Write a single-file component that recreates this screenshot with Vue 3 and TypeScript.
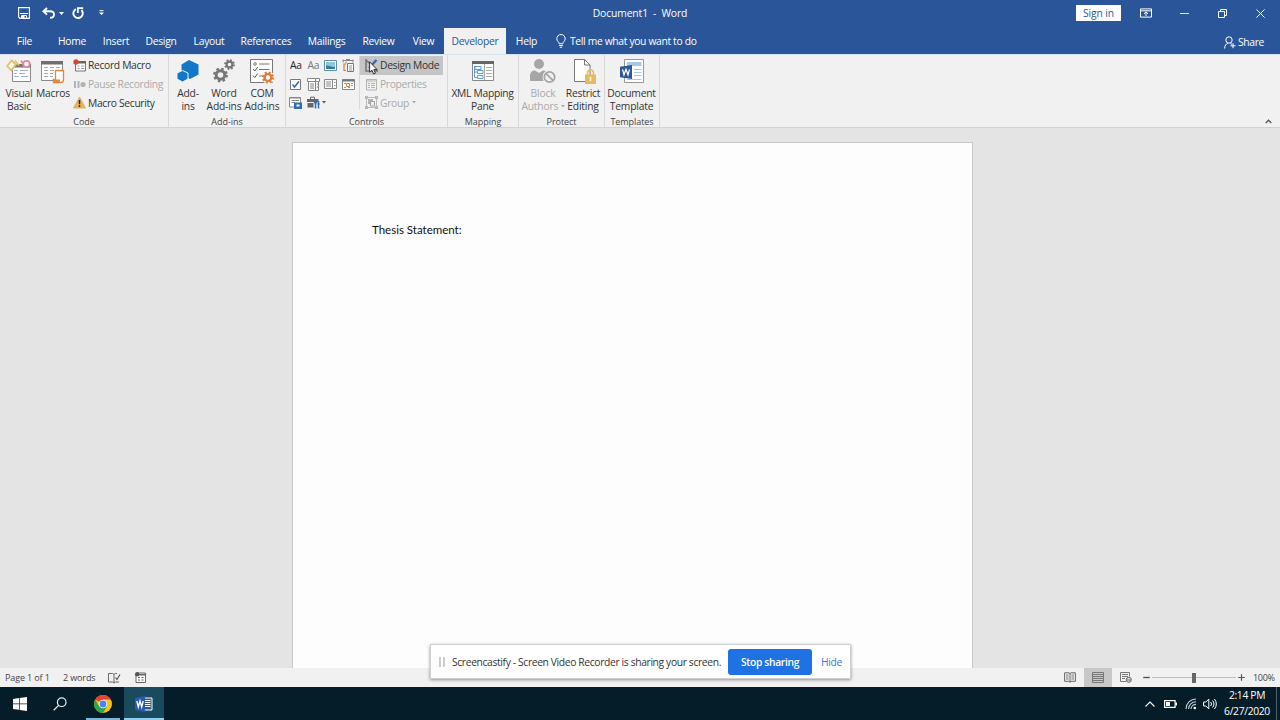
<template>
  <div class="word">
    <!-- Title bar -->
    <header class="titlebar">
      <div class="titlebar__quick">
        <svg class="quick__save" width="12" height="12" viewBox="0 0 12 12">
          <path d="M.6.6h10.8v10.8H2L.6 10z" fill="none" stroke="#fff" stroke-width="1.1" />
          <path d="M2 6.5h8M3.500 11V8.500h5V11" fill="none" stroke="#fff" />
          <path d="M4 8.500h2.500V11H4z" fill="#fff" />
        </svg>
        <svg class="quick__undo" width="13" height="12" viewBox="0 0 13 12">
          <path d="M5 1L1.400 4.300 5 7.600M1.600 4.300h6.200c3 0 4.200 1.600 4.200 3.200 0 2-1.600 3.300-4 3.300" fill="none" stroke="#fff" stroke-width="1.900" />
        </svg>
        <svg class="quick__caret" width="5" height="3" viewBox="0 0 5 3"><path d="M0 0h5L2.500 3z" fill="#fff" /></svg>
        <svg class="quick__redo" width="12" height="12" viewBox="0 0 12 12">
          <path d="M4 2.100A4.700 4.700 0 1 0 9.400 3" fill="none" stroke="#fff" stroke-width="1.900" />
          <path d="M5.900 6V1.200h5.300" fill="none" stroke="#fff" stroke-width="1.700" />
        </svg>
        <svg class="quick__more" width="5" height="6" viewBox="0 0 5 6"><path d="M.5.700h4" stroke="#fff" /><path d="M0 2.500h5L2.500 5z" fill="#fff" /></svg>
      </div>
      <div class="titlebar__name">Document1&nbsp; -&nbsp; Word</div>
      <div class="titlebar__window">
        <button class="titlebar__signin">Sign in</button>
        <svg class="window__ribbon" width="12" height="10" viewBox="0 0 12 10">
          <path d="M.5.900h11v8.200H.5zM.5 2.800h11M6 8V4.200M4 5.800l2-1.900 2 1.900" fill="none" stroke="#fff" />
        </svg>
        <svg class="window__min" width="9" height="9" viewBox="0 0 9 9"><path d="M0 4.500h9" stroke="#dbe5f3" /></svg>
        <svg class="window__restore" width="9" height="9" viewBox="0 0 9 9">
          <path d="M.5 2.500h6v6h-6zM2.500 2.500v-2h6v6h-2" fill="none" stroke="#fff" />
        </svg>
        <svg class="window__close" width="9" height="9" viewBox="0 0 9 9"><path d="M.5.500l8 8M8.500.500l-8 8" stroke="#fff" /></svg>
      </div>
    </header>

    <!-- Ribbon tabs -->
    <nav class="tabs">
      <div
        v-for="tab in tabs"
        :key="tab.label"
        class="tab"
        :class="{ 'tab--active': tab.label === activeTab }"
        :style="{ width: tab.width + 'px' }"
        @click="activeTab = tab.label"
      >
        {{ tab.label }}
      </div>
      <div class="tabs__tell">
        <svg width="10" height="14" viewBox="0 0 10 14">
          <path d="M3.200 9.800C3.200 8 .8 7.200.8 4.700a4.200 4.200 0 0 1 8.400 0c0 2.500-2.400 3.300-2.400 5.100zM3.200 11.500h3.600M3.800 13.200h2.400" fill="none" stroke="#fff" />
        </svg>
        <span>Tell me what you want to do</span>
      </div>
      <div class="tabs__share">
        <svg width="12" height="13" viewBox="0 0 12 13">
          <circle cx="5" cy="4" r="3.200" fill="none" stroke="#fff" />
          <path d="M.6 12.500c.2-3 1.400-4.600 3.200-5.200M6.400 7.200l1.600 1.300M9 7.200v5M6.500 9.800h5" fill="none" stroke="#fff" />
        </svg>
        <span>Share</span>
      </div>
    </nav>

    <!-- Ribbon -->
    <section class="ribbon">
      <div class="group group--code">
        <div class="group__body">
          <div class="big big--vb">
            <svg width="26" height="26" viewBox="0 0 26 26">
              <path d="M6.500 6.500h18v17h-18z" fill="#fff" stroke="#8a8a8a" />
              <path d="M6 6h19v3.500H6z" fill="#777" />
              <path d="M8 12.500h4M14 12.500h8M8 15.500h3M13 15.500h6M8 18.500h5M15 18.500h7" stroke="#9ab4cf" />
              <path d="M5.700 2.500L9.800 6.600 5.200 12.300 1.200 8z" fill="#fff" stroke="#e8be68" stroke-width="1.800" />
              <path d="M9 2.500l4 5" stroke="#e8be68" stroke-width="1.500" />
              <path d="M15 2.500l3.500 6" stroke="#df8796" stroke-width="1.600" />
              <circle cx="20.500" cy="6" r="3.200" fill="#fff" stroke="#df8796" stroke-width="1.800" />
            </svg>
            <span>Visual<br />Basic</span>
          </div>
          <div class="big big--macros">
            <svg width="26" height="26" viewBox="0 0 26 26">
              <path d="M1.500 3.500h21v19h-21z" fill="#fff" stroke="#8a8a8a" />
              <path d="M1 3h22v3.500H1z" fill="#6e6e6e" />
              <path d="M4 9.500h4M10 9.500h4M16 9.500h4M4 12.500h4M10 12.500h4M4 15.500h4M10 15.500h3M4 18.500h4M10 18.500h3" stroke="#a6a6a6" />
              <path d="M15.500 12.500h8v9c0 2-1 3-2.500 3h-7.500v-3h2z" fill="#fff" stroke="#e28743" stroke-width="1.300" />
              <path d="M13 21.500h7v3h-6z" fill="#e28743" />
            </svg>
            <span>Macros</span>
          </div>
          <div class="rows rows--code">
            <div class="row">
              <svg width="13" height="13" viewBox="0 0 13 13">
                <path d="M2.500 2.500h10v9.500h-10z" fill="#fff" stroke="#777" />
                <path d="M4 2h9v2.500H4z" fill="#666" />
                <path d="M4.500 7h2M8 7h3M4.500 9.500h2M8 9.500h3" stroke="#999" />
                <circle cx="3" cy="3" r="2.700" fill="#d14a33" />
              </svg>
              <span>Record Macro</span>
            </div>
            <div class="row row--off">
              <svg width="13" height="13" viewBox="0 0 13 13">
                <path d="M1 3h2v7H1zM4.500 3h2v7h-2z" fill="#b3b3b3" />
                <circle cx="10" cy="6.500" r="2.600" fill="#b3b3b3" />
              </svg>
              <span>Pause Recording</span>
            </div>
            <div class="row">
              <svg width="13" height="13" viewBox="0 0 13 13">
                <path d="M6.500 1l6 11H.5z" fill="#eab55a" stroke="#e2b063" stroke-linejoin="round" />
                <path d="M6.500 4v4.300M6.500 9.300v1.600" stroke="#222" stroke-width="1.500" />
              </svg>
              <span>Macro Security</span>
            </div>
          </div>
        </div>
        <div class="group__label">Code</div>
      </div>

      <div class="group group--addins">
        <div class="group__body">
          <div class="big big--addins">
            <svg width="26" height="26" viewBox="0 0 26 26">
              <path d="M14 2l9.500 4.500v10L15 21 6.500 16.500v-10z" fill="#1177c9" />
              <path d="M7.500 12.500l5.500 2.500v6l-5.500 3L2 21v-6z" fill="#1177c9" stroke="#f1f1f1" />
            </svg>
            <span>Add-<br />ins</span>
          </div>
          <div class="big big--wordaddins">
            <svg width="26" height="26" viewBox="0 0 26 26">
              <circle cx="9.500" cy="17" r="4.300" fill="none" stroke="#777" stroke-width="3" />
              <circle cx="9.500" cy="17" r="6.300" fill="none" stroke="#777" stroke-width="2.200" stroke-dasharray="2.500 2.450" />
              <circle cx="18.500" cy="6.500" r="2.900" fill="none" stroke="#777" stroke-width="2.200" />
              <circle cx="18.500" cy="6.500" r="4.500" fill="none" stroke="#777" stroke-width="1.800" stroke-dasharray="1.800 1.734" />
            </svg>
            <span>Word<br />Add-ins</span>
          </div>
          <div class="big big--com">
            <svg width="26" height="26" viewBox="0 0 26 26">
              <path d="M1.500 1.500h22v23h-22z" fill="#fff" stroke="#777" />
              <circle cx="6" cy="6" r="1.300" fill="none" stroke="#777" />
              <path d="M10 6h10.500M10 11.500h10.500M10 18h3" stroke="#777" />
              <path d="M4 11l1.800 2 3-4M4 17.500l1.800 2 3-4" fill="none" stroke="#555" />
              <circle cx="19" cy="19.500" r="6.400" fill="#fff" />
              <circle cx="19" cy="19.500" r="3.400" fill="none" stroke="#e07b35" stroke-width="2.400" />
              <circle cx="19" cy="19.500" r="5.100" fill="none" stroke="#e07b35" stroke-width="2" stroke-dasharray="2.100 1.905" />
            </svg>
            <span>COM<br />Add-ins</span>
          </div>
        </div>
        <div class="group__label">Add-ins</div>
      </div>

      <div class="group group--controls">
        <div class="group__body">
          <div class="controls">
            <div class="controls__cell controls__cell--rich">Aa</div>
            <div class="controls__cell controls__cell--plain">Aa</div>
            <div class="controls__cell">
              <svg width="13" height="13" viewBox="0 0 13 13">
                <path d="M.5 1.500h12v10H.5z" fill="#fff" stroke="#5f8fa0" />
                <path d="M2 3h9v5H2z" fill="#8ec6e8" /><path d="M2 6.500c3 0 5 1.500 9 1.500v2H2z" fill="#348092" />
              </svg>
            </div>
            <div class="controls__cell">
              <svg width="13" height="13" viewBox="0 0 13 13">
                <path d="M1 1.500h10M1 .5v3M11 .5v3M4 2.500v2M4 .5h4" stroke="#888" />
                <path d="M5.500 4.500h6v8h-6z" fill="#fff" stroke="#777" />
                <path d="M7 7h3M7 9h3M7 11h3" stroke="#999" />
                <path d="M4 5H2v6.500h2" fill="none" stroke="#e07b35" stroke-width="1.200" />
              </svg>
            </div>
            <div class="controls__cell">
              <svg width="13" height="13" viewBox="0 0 13 13">
                <path d="M1.500 1.500h10v10h-10z" fill="#fff" stroke="#777" />
                <path d="M3.500 6.500l2 2.500 4.500-5.500" fill="none" stroke="#2c6db5" stroke-width="1.600" />
              </svg>
            </div>
            <div class="controls__cell">
              <svg width="13" height="13" viewBox="0 0 13 13">
                <path d="M.5.500h12v3H.5zM1.500 3.500h10v9h-10z" fill="#fff" stroke="#888" />
                <path d="M8.500 1v11M3 6h4M3 8h4M3 10h4" stroke="#888" /><path d="M9.500 6h2M9.500 9h2" stroke="#888" />
              </svg>
            </div>
            <div class="controls__cell">
              <svg width="13" height="13" viewBox="0 0 13 13">
                <path d="M.5 1.500h12v9H.5z" fill="#fff" stroke="#888" />
                <path d="M8.500 2v9M2 4h5M2 6h5M2 8h5M10 4.500h1.500M10 7.500h1.500" stroke="#888" />
              </svg>
            </div>
            <div class="controls__cell">
              <svg width="13" height="13" viewBox="0 0 13 13">
                <path d="M.5 1.500h12v10H.5z" fill="#fff" stroke="#888" />
                <path d="M.5 1.500h12v2H.5z" fill="#777" />
                <path d="M2 5.500h2M9 5.500h2M2 9.500h2M6 9.500h2M9 7.500h2" stroke="#999" />
                <path d="M4.500 5.500h3v3h-3z" fill="#fff" stroke="#e07b35" />
              </svg>
            </div>
            <div class="controls__cell">
              <svg width="13" height="13" viewBox="0 0 13 13">
                <path d="M.5 1.500h11v9.500H.5z" fill="#fff" stroke="#888" />
                <path d="M1 2h10.500M2.500 4.500H10M2.500 6.500H6" stroke="#888" />
                <path d="M5 6.500h8V13H5z" fill="#2c6db5" /><path d="M7.500 8.500h3v2h-3z" fill="#fff" />
              </svg>
            </div>
            <div class="controls__cell controls__cell--tools">
              <svg width="13" height="13" viewBox="0 0 13 13">
                <path d="M3.500 3V1.200h4V3" fill="none" stroke="#666" />
                <path d="M0 3h11.500v3H0zM.5 7h6v4.500h-6z" fill="#666" />
                <path d="M8.500 5v7.500M11.500 5v7.500" stroke="#2c6db5" stroke-width="1.500" />
                <path d="M7.300 5v2h2.500V5M10.500 8h2.300" fill="none" stroke="#2c6db5" />
              </svg>
              <svg width="4" height="3" viewBox="0 0 4 3"><path d="M0 0h4L2 2.500z" fill="#555" /></svg>
            </div>
          </div>
          <div class="rows rows--controls">
            <div class="row row--pressed">
              <svg width="13" height="13" viewBox="0 0 13 13">
                <path d="M1 1v11h11.500z" fill="none" stroke="#777" stroke-width="1.600" />
                <path d="M4 9l7.500-8" stroke="#2c6db5" stroke-width="2.400" />
              </svg>
              <span>Design Mode</span>
            </div>
            <div class="row row--off">
              <svg width="13" height="13" viewBox="0 0 13 13">
                <path d="M1.500 1.500h10v10.500h-10zM1.500 3h10" fill="none" stroke="#b3b3b3" />
                <path d="M3 5.500h2M6 5.500h4M3 7.500h2M6 7.500h4M3 9.500h2M6 9.500h4" stroke="#b3b3b3" />
              </svg>
              <span>Properties</span>
            </div>
            <div class="row row--off">
              <svg width="13" height="13" viewBox="0 0 13 13">
                <path d="M1.500 1.500h10v10h-10z" fill="none" stroke="#bbb" />
                <path d="M3 3h5v5H3z" fill="#b3b3b3" /><path d="M5.500 5.500h4v4.500h-4z" fill="#eee" stroke="#a3a3a3" />
                <path d="M0 0h3v3H0zM10 0h3v3h-3zM0 10h3v3H0zM10 10h3v3h-3z" fill="#b8b8b8" />
              </svg>
              <span>Group</span>
              <svg class="row__caret" width="4" height="3" viewBox="0 0 4 3"><path d="M0 0h4L2 2.500z" fill="#aaa" /></svg>
            </div>
          </div>
        </div>
        <div class="group__label">Controls</div>
      </div>

      <div class="group group--mapping">
        <div class="group__body">
          <div class="big big--xml">
            <svg width="26" height="26" viewBox="0 0 26 26">
              <path d="M2.500 3.500h21v19h-21z" fill="#fff" stroke="#888" />
              <path d="M2 3h22v3H2z" fill="#666" />
              <path d="M14.500 6v16M16 9.500h6M16 12.500h6M16 15.500h6M16 18.500h6" stroke="#aaa" />
              <path d="M4.500 8v11.500H7M4.500 14H7" fill="none" stroke="#5b9bd5" />
              <path d="M5 8.500h6v3H5zM7.500 12.500h5.500v3H7.500zM7.500 17.500h5.500v3H7.500z" fill="#fff" stroke="#5b9bd5" />
            </svg>
            <span>XML Mapping<br />Pane</span>
          </div>
        </div>
        <div class="group__label">Mapping</div>
      </div>

      <div class="group group--protect">
        <div class="group__body">
          <div class="big big--block big--off">
            <svg width="28" height="26" viewBox="0 0 28 26">
              <circle cx="10" cy="6" r="5" fill="#a6a6a6" />
              <path d="M1 23v-5c0-3.500 2-5.500 5-5.500l4 2.500 4-2.500c3 0 4.500 2 4.500 5V23z" fill="#a6a6a6" />
              <circle cx="20.500" cy="19" r="7" fill="#f1f1f1" />
              <circle cx="20.500" cy="19" r="5.200" fill="none" stroke="#a6a6a6" stroke-width="1.800" />
              <path d="M16.800 15.300l7.400 7.400" stroke="#a6a6a6" stroke-width="1.800" />
            </svg>
            <span>Block<br />Authors <svg width="4" height="3" viewBox="0 0 4 3"><path d="M0 0h4L2 2.500z" fill="#aaa" /></svg></span>
          </div>
          <div class="big big--restrict">
            <svg width="26" height="26" viewBox="0 0 26 26">
              <path d="M4.500 1.500h10l5.500 5.500v16.500H4.500z" fill="#fff" stroke="#777" />
              <path d="M14.500 1.500V7H20" fill="none" stroke="#777" />
              <path d="M17.500 17v-3a3.200 3.200 0 0 1 6 0v3" fill="none" stroke="#e9b85f" stroke-width="1.600" />
              <path d="M15 16.500h11V26H15z" fill="#e9b85f" />
              <path d="M20.500 19v4" stroke="#fff" stroke-width="1.600" />
            </svg>
            <span>Restrict<br />Editing</span>
          </div>
        </div>
        <div class="group__label">Protect</div>
      </div>

      <div class="group group--templates">
        <div class="group__body">
          <div class="big big--template">
            <svg width="26" height="26" viewBox="0 0 26 26">
              <path d="M5.500 1.500h19v23h-19z" fill="#fff" stroke="#999" />
              <path d="M8 4h14.500v4H8z" fill="#a6c8e6" />
              <path d="M15 11.500h7.500M15 14.500h7.500M15 17.500h7.500M8 21.500h14.500" stroke="#a6c8e6" />
              <path d="M1 8.800l12-1.800v14L1 19.200z" fill="#2a579a" />
              <path d="M3.500 11.300l1.500 5.500 2-5.500 2 5.500 1.500-5.500" fill="none" stroke="#fff" stroke-width="1.300" />
            </svg>
            <span>Document<br />Template</span>
          </div>
        </div>
        <div class="group__label">Templates</div>
      </div>

      <svg class="ribbon__collapse" width="7" height="5" viewBox="0 0 7 5"><path d="M.7 4l2.800-2.800L6.300 4" fill="none" stroke="#555" stroke-width="1.300" /></svg>
    </section>

    <!-- Document -->
    <main class="workspace">
      <div class="page">Thesis Statement:</div>
    </main>

    <!-- Status bar -->
    <footer class="status">
      <span class="status__page">Page 1 of 1</span>
      <span class="status__words">2 words</span>
      <svg class="status__proof" width="13" height="12" viewBox="0 0 13 12">
        <path d="M6 2.300L4.500 1.500h-4v8.500h4L6 11l1.500-1H11M6 2.300V11M6 2.300l1.500-.8H9" fill="none" stroke="#666" />
        <path d="M7.500 5.500L9 7.500l3-5" fill="none" stroke="#555" stroke-width="1.200" />
      </svg>
      <svg class="status__macro" width="11" height="11" viewBox="0 0 11 11">
        <path d="M1 2.500h9.500v8H1zM3 1h7.500v2H3z" fill="#fff" stroke="#666" />
        <path d="M3 5.500h2M6.500 5.500h2M3 8h2M6.500 8h2" stroke="#555" /><circle cx="2.200" cy="2.200" r="2.200" fill="#555" />
      </svg>
      <div class="status__views">
        <div class="view">
          <svg width="12" height="11" viewBox="0 0 12 11">
            <path d="M6 1.700L5 .8H.6v8.500H5l1 .9 1-.9h4.400V.8H7zM6 1.500v9" fill="none" stroke="#666" />
            <path d="M2 3h2.500M2 5h2.500M2 7h2.500M7.500 3H10M7.500 5H10M7.500 7H10" stroke="#777" />
          </svg>
        </div>
        <div class="view view--active">
          <svg width="12" height="11" viewBox="0 0 12 11">
            <path d="M.5.500h11v10H.5zM1 2.500h10M1 4.500h10M1 6.500h10M1 8.500h10" fill="none" stroke="#777" />
          </svg>
        </div>
        <div class="view">
          <svg width="12" height="11" viewBox="0 0 12 11">
            <path d="M9.500 4.500v-4h-9v9H6M2 2.500h6M2 4.500h6M2 6.500h3" fill="none" stroke="#777" />
            <circle cx="8.800" cy="7.800" r="2.500" fill="#ddd" stroke="#666" /><path d="M6.500 8h4.600" stroke="#777" />
          </svg>
        </div>
      </div>
      <div class="zoom">
        <svg width="7" height="7" viewBox="0 0 7 7"><path d="M.2 3.500h6.600" stroke="#555" stroke-width="1.400" /></svg>
        <div class="zoom__track"><div class="zoom__thumb"></div></div>
        <svg width="7" height="7" viewBox="0 0 7 7"><path d="M.2 3.500h6.600M3.500.200v6.600" stroke="#555" stroke-width="1.200" /></svg>
        <span class="zoom__value">{{ zoom }}%</span>
      </div>
    </footer>

    <!-- Windows taskbar -->
    <div class="taskbar">
      <div class="task task--start">
        <svg width="14" height="14" viewBox="0 0 14 14"><path d="M0 2l6-.9v5.500H0zM6.700 1L14 0v6.600H6.700zM0 7.300h6v5.500L0 12zM6.700 7.300H14V14l-7.300-1z" fill="#fff" /></svg>
      </div>
      <div class="task task--search">
        <svg width="14" height="14" viewBox="0 0 14 14"><circle cx="8.700" cy="5.200" r="4.300" fill="none" stroke="#e8edef" stroke-width="1.200" /><path d="M5.600 8.400L.7 13.300" stroke="#e8edef" stroke-width="1.300" /></svg>
      </div>
      <div class="task task--chrome">
        <svg width="18" height="18" viewBox="0 0 18 18">
          <circle cx="9" cy="9" r="9" fill="#fbc116" />
          <path d="M9 9L1.200 4.500A9 9 0 0 1 16.800 4.500H9z" fill="#e24435" />
          <path d="M1.200 4.500A9 9 0 0 0 9 18l4-6.800L9 9 5.100 11.200z" fill="#2da44e" />
          <circle cx="9" cy="9" r="4.300" fill="#fff" /><circle cx="9" cy="9" r="3.400" fill="#4285f4" />
        </svg>
      </div>
      <div class="task task--word">
        <svg width="18" height="16" viewBox="0 0 18 16">
          <path d="M9 2h8v12H9z" fill="#2b579a" stroke="#fff" />
          <path d="M10 4.500h5.500M10 6.500h5.500M10 8.500h5.500M10 10.500h5.500" stroke="#fff" />
          <path d="M0 2l10-2v16L0 14z" fill="#2b5cab" />
          <path d="M1.800 5l1.500 6L5 5l1.700 6 1.500-6" fill="none" stroke="#fff" stroke-width="1.300" />
        </svg>
      </div>
      <div class="tray">
        <svg class="tray__up" width="10" height="6" viewBox="0 0 10 6"><path d="M.5 5.500L5 1l4.500 4.500" fill="none" stroke="#fff" stroke-width="1.100" /></svg>
        <svg class="tray__battery" width="13" height="8" viewBox="0 0 13 8"><path d="M.6.600h10.500v6.800H.6z" fill="none" stroke="#fff" stroke-width="1.200" /><path d="M2 2h4v4H2zM11.500 2.500H13v3h-1.500z" fill="#fff" /></svg>
        <svg class="tray__wifi" width="12" height="12" viewBox="0 0 12 12">
          <path d="M1 11A10 10 0 0 1 11 1M3.500 11A7.500 7.500 0 0 1 11 3.700M6 11a5 5 0 0 1 5-4.600" fill="none" stroke="#c7d0d4" stroke-width="1.100" />
          <circle cx="9.800" cy="10" r="1.300" fill="#fff" />
        </svg>
        <svg class="tray__sound" width="14" height="12" viewBox="0 0 14 12">
          <path d="M.6 4h2.200l3-2.800v9.600l-3-2.800H.6zM7.700 4a3 3 0 0 1 0 4M9.500 2.500a5 5 0 0 1 0 7M11.400 1a7.500 7.500 0 0 1 0 10" fill="none" stroke="#fff" />
        </svg>
        <div class="tray__clock">2:14 PM<br />6/27/2020</div>
        <div class="tray__desktop"></div>
      </div>
    </div>

    <!-- Screen share notice floating over the document -->
    <div v-if="sharing" class="share">
      <div class="share__grip"></div>
      <span class="share__text">Screencastify - Screen Video Recorder is sharing your screen.</span>
      <button class="share__stop" @click="sharing = false">Stop sharing</button>
      <a class="share__hide" @click="sharing = false">Hide</a>
    </div>

    <svg class="cursor" width="9" height="14" viewBox="0 0 9 14">
      <path d="M.6.800v10.400l2.400-2 1.600 3.800 1.800-.8-1.600-3.600H8z" fill="#fff" stroke="#222" stroke-width=".9" />
    </svg>
  </div>
</template>

<script setup lang="ts">
import { ref } from 'vue';

interface Tab {
  label: string;
  width: number;
}

const tabs: Tab[] = [
  { label: 'File', width: 49 },
  { label: 'Home', width: 46 },
  { label: 'Insert', width: 42 },
  { label: 'Design', width: 48 },
  { label: 'Layout', width: 48 },
  { label: 'References', width: 66 },
  { label: 'Mailings', width: 55 },
  { label: 'Review', width: 49 },
  { label: 'View', width: 41 },
  { label: 'Developer', width: 62 },
  { label: 'Help', width: 41 },
];

const activeTab = ref('Developer');
const sharing = ref(true);
const zoom = ref(100);
</script>

<style>
body {
  overflow: hidden;
}
</style>

<style scoped>
.word {
  position: relative;
  display: flex;
  flex-direction: column;
  width: 1280px;
  height: 720px;
  font-family: 'Open Sans', 'Noto Sans', sans-serif;
  font-size: 10.3px;
  letter-spacing: -0.33px;
  color: #333;
  background: #e4e4e4;
  white-space: nowrap;
}

svg {
  display: block;
  flex: none;
}

button {
  font: inherit;
  letter-spacing: inherit;
  border: none;
  padding: 0;
}

/* Title bar */
.titlebar {
  display: flex;
  align-items: center;
  height: 28px;
  padding-bottom: 2px;
  box-sizing: border-box;
  background: #2a5699;
  color: #fff;
}

.titlebar__quick {
  display: flex;
  align-items: center;
  width: 520px;
  padding-left: 18px;
  box-sizing: border-box;
}

.quick__undo {
  margin-left: 12px;
}

.quick__caret {
  margin-left: 4px;
}

.quick__redo {
  margin-left: 8px;
}

.quick__more {
  margin-left: 15px;
}

.titlebar__name {
  width: 240px;
  text-align: center;
  letter-spacing: -0.1px;
}

.titlebar__window {
  display: flex;
  align-items: center;
  flex: 1;
  justify-content: flex-end;
  padding-right: 15px;
}

.titlebar__signin {
  width: 45px;
  height: 16px;
  background: #fff;
  color: #2a5699;
  letter-spacing: -0.1px;
}

.window__ribbon {
  margin-left: 19px;
}

.window__min {
  margin-left: 28px;
}

.window__restore {
  margin-left: 29px;
}

.window__close {
  margin-left: 29px;
}

/* Tabs */
.tabs {
  display: flex;
  height: 26px;
  background: #2a5699;
  color: #fff;
}

.tab {
  display: flex;
  align-items: center;
  justify-content: center;
  height: 26px;
  letter-spacing: -0.25px;
}

.tab--active {
  background: #f1f1f1;
  color: #2a5699;
}

.tabs__tell {
  display: flex;
  align-items: center;
  gap: 4px;
  margin-left: 9px;
}

.tabs__share {
  display: flex;
  align-items: center;
  gap: 2px;
  margin-left: auto;
  margin-right: 16px;
  padding-top: 2px;
}

/* Ribbon */
.ribbon {
  display: flex;
  height: 74px;
  box-sizing: border-box;
  background: #f1f1f1;
  border-top: 1px solid #d5e3f5;
  border-bottom: 1px solid #d2d2d2;
}

.group {
  display: flex;
  flex-direction: column;
  box-sizing: border-box;
  height: 72px;
  border-right: 1px solid #d8d8d8;
}

.group--code {
  width: 169px;
}

.group--addins {
  width: 117px;
}

.group--controls {
  width: 162px;
}

.group--mapping {
  width: 71px;
}

.group--protect {
  width: 86px;
}

.group--templates {
  width: 55px;
}

.group__body {
  display: flex;
  height: 61px;
}

.group__label {
  height: 11px;
  line-height: 12px;
  font-size: 9px;
  letter-spacing: -0.05px;
  text-align: center;
  color: #444;
}

.big {
  display: flex;
  flex-direction: column;
  align-items: center;
  flex: none;
  padding-top: 3px;
  box-sizing: border-box;
  line-height: 13px;
  text-align: center;
  letter-spacing: -0.2px;
}

.big > span {
  margin-top: 3px;
}

.big span svg {
  display: inline-block;
  vertical-align: 2px;
}

.big--off {
  color: #aaa;
}

.big--vb {
  width: 38px;
}

.big--macros {
  width: 30px;
}

.big--addins {
  width: 38px;
}

.big--wordaddins {
  width: 34px;
}

.big--com {
  width: 42px;
}

.big--xml {
  width: 69px;
  letter-spacing: -0.3px;
}

.big--block {
  width: 48px;
}

.big--restrict {
  width: 32px;
}

.big--template {
  width: 53px;
}

.rows {
  display: flex;
  flex-direction: column;
  padding-top: 1px;
}

.rows--code {
  margin-left: 5px;
}

.rows--controls {
  width: 83px;
  border-left: 1px solid #d8d8d8;
  height: 53px;
  margin-top: 1px;
  padding-top: 0;
}

.rows--controls .row {
  padding-left: 5px;
}

.row {
  display: flex;
  align-items: center;
  flex: none;
  gap: 2px;
  height: 18.8px;
}

.row--off {
  color: #aaa;
}

.row--pressed {
  background: #c5c5c5;
}

.row__caret {
  margin-left: 1px;
}

.controls {
  display: grid;
  grid-template-columns: repeat(4, 17.5px);
  grid-auto-rows: 18.8px;
  width: 72px;
  padding: 1px 0 0 1px;
}

.controls__cell {
  display: flex;
  align-items: center;
  justify-content: center;
}

.controls__cell--rich {
  color: #222;
}

.controls__cell--plain {
  color: #777;
}

.controls__cell--tools {
  gap: 2px;
  margin-right: -7px;
}

.ribbon__collapse {
  align-self: flex-end;
  margin: 0 8px 3px auto;
}

/* Document */
.workspace {
  display: flex;
  flex: 1;
  padding: 14px 0 0 292px;
  overflow: hidden;
}

.page {
  width: 681px;
  box-sizing: border-box;
  padding: 79px 0 0 79px;
  border: 1px solid #c8c8c8;
  border-bottom: none;
  background: #fdfdfd;
  color: #111;
  font-family: Lato, sans-serif;
  font-size: 11.5px;
  line-height: 16px;
  letter-spacing: 0;
}

/* Status bar */
.status {
  display: flex;
  align-items: center;
  height: 19px;
  background: #f1f1f1;
  font-size: 9px;
  letter-spacing: -0.13px;
  color: #444;
}

.status__page {
  width: 58px;
  margin-left: 5px;
}

.status__words {
  width: 45px;
}

.status__macro {
  margin-left: 14px;
}

.status__views {
  display: flex;
  margin-left: auto;
}

.view {
  display: flex;
  align-items: center;
  justify-content: center;
  width: 28px;
  height: 19px;
}

.view--active {
  background: #c8c8c8;
}

.zoom {
  display: flex;
  align-items: center;
  width: 140px;
  padding-left: 3px;
  box-sizing: border-box;
}

.zoom__track {
  display: flex;
  align-items: center;
  justify-content: center;
  width: 84px;
  height: 10px;
  margin: 0 2px;
  background: linear-gradient(#bdbdbd, #bdbdbd) center / 100% 1px no-repeat;
}

.zoom__thumb {
  width: 4px;
  height: 10px;
  background: #666;
}

.zoom__value {
  margin-left: 8px;
  letter-spacing: -0.3px;
}

/* Taskbar */
.taskbar {
  display: flex;
  height: 33px;
  background: #041d29;
  color: #fff;
}

.task {
  display: flex;
  align-items: center;
  justify-content: center;
  box-sizing: border-box;
  height: 33px;
}

.task--start {
  width: 40px;
}

.task--search {
  width: 40px;
}

.task--chrome {
  width: 34px;
  margin: 0 4px 0 6px;
  padding-top: 2px;
  border-bottom: 2px solid #76b9dd;
}

.task--word {
  width: 40px;
  padding-top: 2px;
  background: #1a4b5d;
  border-bottom: 2px solid #8bd0f0;
}

.tray {
  display: flex;
  align-items: center;
  margin-left: auto;
}

.tray__battery {
  margin-left: 9px;
}

.tray__wifi {
  margin-left: 8px;
}

.tray__sound {
  margin-left: 6px;
}

.tray__clock {
  width: 58px;
  padding-left: 1px;
  line-height: 15.5px;
  text-align: center;
}

.tray__desktop {
  width: 3px;
  height: 33px;
  border-left: 1px solid #4c5e67;
}

/* Share notice */
.share {
  position: absolute;
  left: 430px;
  top: 644px;
  display: flex;
  align-items: center;
  width: 421px;
  height: 35px;
  box-sizing: border-box;
  border: 1px solid #d0d0d0;
  background: #fff;
  box-shadow: 0 1px 3px rgba(0, 0, 0, 0.4);
}

.share__grip {
  width: 2px;
  height: 10px;
  margin-left: 8px;
  border-left: 2px solid #ccc;
  border-right: 2px solid #ccc;
}

.share__text {
  width: 276px;
  margin-left: 7px;
  letter-spacing: -0.36px;
}

.share__stop {
  width: 84px;
  height: 26px;
  border-radius: 3px;
  background: #1f72e4;
  color: #fff;
  font-weight: 600;
}

.share__hide {
  margin-left: 9px;
  color: #3c78cf;
}

.cursor {
  position: absolute;
  left: 369px;
  top: 61px;
}
</style>
